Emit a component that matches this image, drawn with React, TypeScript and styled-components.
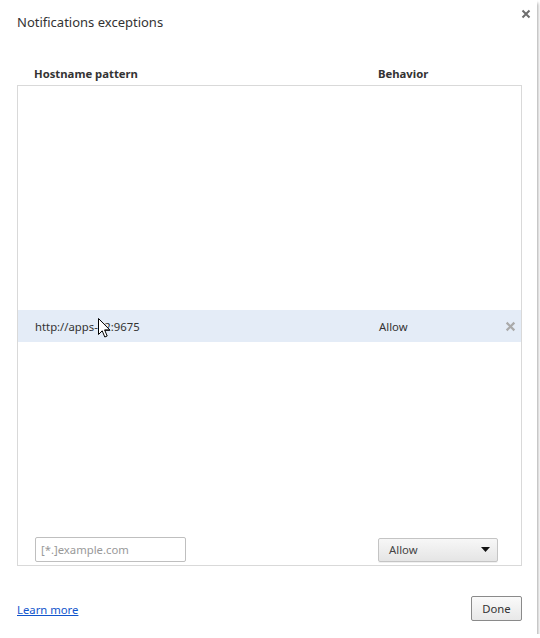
import React from "react";
import styled, { createGlobalStyle } from "styled-components";

const Global = createGlobalStyle`
  html, body { margin: 0; padding: 0; background: #fff; }
  body { font-family: "Noto Sans", "Open Sans", sans-serif; color: #333; }
  * { box-sizing: border-box; }
`;

const Dialog = styled.div`
  position: relative;
  width: 537px;
  height: 634px;
  background: #fff;
  box-shadow: 1px 3px 3px rgba(0, 0, 0, 0.35);
  display: flex;
  flex-direction: column;
`;

const TitleBar = styled.div`
  display: flex;
  justify-content: space-between;
  align-items: flex-start;
  padding: 12px 5px 0 17px;
  height: 58px;
`;

const Title = styled.h1`
  margin: 0;
  font-size: 13px;
  font-weight: 400;
  color: #333;
  line-height: 20px;
`;

const CloseButton = styled.button`
  border: 0;
  background: none;
  padding: 0;
  width: 12px;
  height: 12px;
  margin-top: -4px;
  display: flex;
  align-items: center;
  justify-content: center;
  cursor: pointer;
`;

const Content = styled.div`
  padding: 0 15px 0 17px;
  display: flex;
  flex-direction: column;
`;

const Columns = styled.div`
  display: grid;
  grid-template-columns: 344px 1fr 24px;
  align-items: center;
  padding: 0 5px 0 17px;
`;

const HeaderRow = styled(Columns)`
  height: 27px;
  align-items: end;
  padding-bottom: 4px;
  font-size: 11.3px;
  font-weight: 700;
  color: #333;
`;

const ListBox = styled.div`
  height: 481px;
  border: 1px solid #d9d9d9;
  display: flex;
  flex-direction: column;
`;

const ListBody = styled.div`
  flex: 1;
  padding-top: 224px;
`;

const Row = styled(Columns)<{ $selected?: boolean }>`
  position: relative;
  height: 32px;
  font-size: 11.3px;
  color: #333;
  background: ${(p) => (p.$selected ? "#e4ecf7" : "transparent")};
`;

const DeleteBtn = styled.button`
  justify-self: end;
  border: 0;
  background: none;
  padding: 0;
  width: 12px;
  height: 12px;
  display: flex;
  align-items: center;
  justify-content: center;
`;

const AddRow = styled(Columns)`
  height: 30px;
  padding-bottom: 1px;
`;

const TextInput = styled.input`
  width: 151px;
  height: 25px;
  border: 1px solid #bfbfbf;
  border-radius: 2px;
  padding: 0 5px;
  font-family: inherit;
  font-size: 11.3px;
  color: #333;
  outline: none;
  &::placeholder { color: #999; }
`;

const SelectBox = styled.div`
  width: 120px;
  height: 24px;
  margin-left: -1px;
  border: 1px solid #c4c4c4;
  border-radius: 2px;
  background: linear-gradient(#f7f7f7, #e5e5e5);
  display: flex;
  align-items: center;
  justify-content: space-between;
  padding: 0 7px 0 10px;
  font-size: 11.3px;
  color: #444;
  box-shadow: 0 1px 0 rgba(0, 0, 0, 0.06);
`;

const Footer = styled.div`
  margin-top: auto;
  display: flex;
  justify-content: space-between;
  align-items: center;
  padding: 0 15px 13px 17px;
`;

const Link = styled.a`
  font-size: 11.3px;
  color: #15c;
  text-decoration: underline;
  margin-top: 1px;
`;

const Button = styled.button`
  width: 51px;
  height: 25px;
  border: 1px solid #8a8a8a;
  border-radius: 2px;
  background: linear-gradient(#fafafa, #e8e8e8);
  font-family: inherit;
  font-size: 11.3px;
  color: #333;
  padding: 0;
`;

const Pointer = styled.svg`
  position: absolute;
  left: 80px;
  top: 8px;
  pointer-events: none;
`;

const Cross = ({ color, size }: { color: string; size: number }) => (
  <svg width={size} height={size} viewBox="0 0 10 10">
    <path d="M1.5 1.5 L8.5 8.5 M8.5 1.5 L1.5 8.5" stroke={color} strokeWidth="2" />
  </svg>
);

export default function App() {
  return (
    <>
      <Global />
      <Dialog>
        <TitleBar>
          <Title>Notifications exceptions</Title>
          <CloseButton aria-label="Close">
            <Cross color="#6e6e6e" size={10} />
          </CloseButton>
        </TitleBar>
        <Content>
          <HeaderRow>
            <span>Hostname pattern</span>
            <span>Behavior</span>
            <span />
          </HeaderRow>
          <ListBox>
            <ListBody>
              <Row $selected>
                <span>http://apps-12:9675</span>
                <span>Allow</span>
                <DeleteBtn aria-label="Delete">
                  <Cross color="#aaa" size={11} />
                </DeleteBtn>
                <Pointer width="13" height="21" viewBox="0 0 13 21">
                  <path
                    d="M0.5 0.5 L0.5 16.5 L4.2 12.8 L6.8 19 L9.2 18 L6.6 11.9 L11.8 11.9 Z"
                    fill="#fff"
                    stroke="#000"
                    strokeWidth="1"
                    strokeLinejoin="miter"
                  />
                </Pointer>
              </Row>
            </ListBody>
            <AddRow>
              <TextInput placeholder="[*.]example.com" />
              <SelectBox>
                <span>Allow</span>
                <svg width="9" height="5" viewBox="0 0 9 5">
                  <path d="M0 0 H9 L4.5 5 Z" fill="#111" />
                </svg>
              </SelectBox>
              <span />
            </AddRow>
          </ListBox>
        </Content>
        <Footer>
          <Link href="#">Learn more</Link>
          <Button>Done</Button>
        </Footer>
      </Dialog>
    </>
  );
}
